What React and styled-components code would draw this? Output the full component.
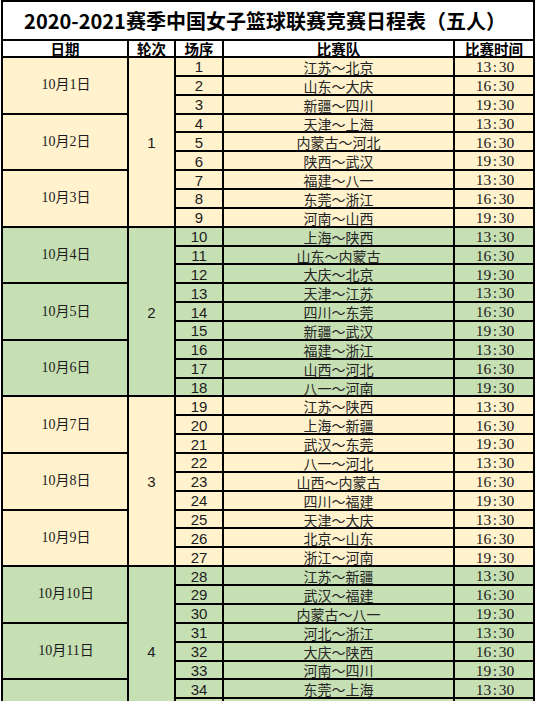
import React from "react";
import styled, { createGlobalStyle } from "styled-components";

const GlobalStyle = createGlobalStyle`
	html,
	body {
		margin: 0;
		padding: 0;
		overflow: hidden;
		background: #ffffff;
	}
`;

const COLORS = {
	peach: "#fff2cc",
	green: "#c6e0b4"
};

const TIMES = ["13:30", "16:30", "19:30"];

const MATCHES = [
	"江苏～北京", "山东～大庆", "新疆～四川",
	"天津～上海", "内蒙古～河北", "陕西～武汉",
	"福建～八一", "东莞～浙江", "河南～山西",
	"上海～陕西", "山东～内蒙古", "大庆～北京",
	"天津～江苏", "四川～东莞", "新疆～武汉",
	"福建～浙江", "山西～河北", "八一～河南",
	"江苏～陕西", "上海～新疆", "武汉～东莞",
	"八一～河北", "山西～内蒙古", "四川～福建",
	"天津～大庆", "北京～山东", "浙江～河南",
	"江苏～新疆", "武汉～福建", "内蒙古～八一",
	"河北～浙江", "大庆～陕西", "河南～四川",
	"东莞～上海", "山西～天津", "北京～新疆"
];

const Sheet = styled.div`
	display: grid;
	grid-template-columns: 124px 45px 46px 229px 78px;
	grid-template-rows: 37px 15px repeat(36, 16.86px);
	gap: 2px;
	padding: 2px;
	margin-left: 1px;
	width: 530px;
	background: #000000;
	color: #1c1c1c;
`;

const Cell = styled.div`
	display: flex;
	align-items: center;
	justify-content: center;
	background: ${(p) => p.$bg || "#ffffff"};
	grid-row: ${(p) => (p.$rows ? `span ${p.$rows}` : "auto")};
	line-height: 1;
	white-space: nowrap;
`;

const Title = styled(Cell)`
	grid-column: 1 / -1;
	font-family: "Noto Sans CJK SC", "Noto Sans", sans-serif;
	font-size: 20px;
	font-weight: 700;
	color: #000000;
	padding-right: 6px;
`;

const HeadCell = styled(Cell)`
	font-family: "Noto Sans CJK SC", sans-serif;
	font-size: 14.5px;
	line-height: 15px;
	font-weight: 700;
	color: #000000;
`;

const DateCell = styled(Cell)`
	font-family: "Liberation Serif", "Noto Sans CJK SC", serif;
	font-size: 14px;
	padding-left: 2px;
`;

const NumCell = styled(Cell)`
	font-family: "Liberation Sans", Arial, sans-serif;
	font-size: 15px;
	padding-top: 1px;
`;

const TeamCell = styled(Cell)`
	font-family: "Noto Sans CJK SC", sans-serif;
	font-size: 14px;
	padding-top: 1px;
	color: #262626;
`;

const TimeCell = styled(Cell)`
	font-family: "Liberation Serif", serif;
	font-size: 15.5px;
	padding-top: 1px;
	padding-left: 2px;
`;

const Colon = styled.span`
	margin: 0 1.5px;
`;

function Time({ value }) {
	const [h, m] = value.split(":");
	return (
		<>
			{h}
			<Colon>:</Colon>
			{m}
		</>
	);
}

export default function App() {
	const rows = MATCHES.map((team, i) => {
		const round = Math.floor(i / 9);
		const bg = round % 2 === 0 ? COLORS.peach : COLORS.green;
		const cells = [];

		if (i % 3 === 0) {
			cells.push(
				<DateCell key={"d" + i} $rows={3} $bg={bg}>
					10月{i / 3 + 1}日
				</DateCell>
			);
		}
		if (i % 9 === 0) {
			cells.push(
				<NumCell key={"r" + i} $rows={9} $bg={bg}>
					{round + 1}
				</NumCell>
			);
		}
		cells.push(
			<NumCell key={"s" + i} $bg={bg}>
				{i + 1}
			</NumCell>,
			<TeamCell key={"t" + i} $bg={bg}>
				{team}
			</TeamCell>,
			<TimeCell key={"h" + i} $bg={bg}>
				<Time value={TIMES[i % 3]} />
			</TimeCell>
		);
		return cells;
	});

	return (
		<React.Fragment>
			<GlobalStyle />
			<Sheet>
				<Title>2020-2021赛季中国女子篮球联赛竞赛日程表（五人）</Title>
				<HeadCell>日期</HeadCell>
				<HeadCell>轮次</HeadCell>
				<HeadCell>场序</HeadCell>
				<HeadCell>比赛队</HeadCell>
				<HeadCell>比赛时间</HeadCell>
				{rows}
			</Sheet>
		</React.Fragment>
	);
}
